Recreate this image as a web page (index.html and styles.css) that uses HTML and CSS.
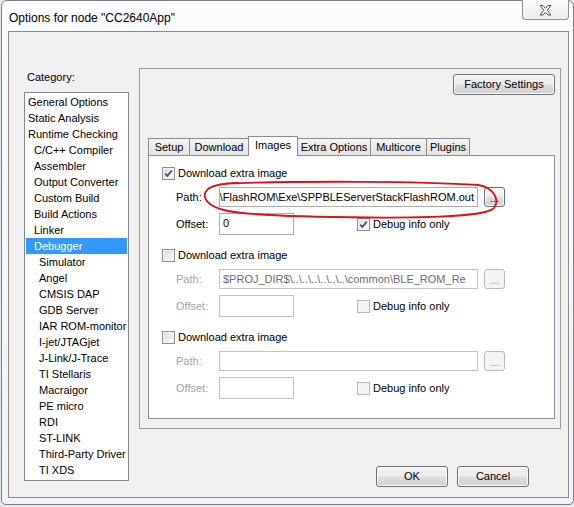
FILE: index.html
```html
<!DOCTYPE html>
<html>
<head>
<meta charset="utf-8">
<title>Options for node "CC2640App"</title>
<link rel="stylesheet" href="styles.css">
</head>
<body>
<div class="window">
  <div class="titlebar">
    <span class="title">Options for node "CC2640App"</span>
    <div class="close">
      <svg width="13" height="11" viewBox="0 0 13 11"><polygon points="1,0.5 4,0.5 6.5,3.3 9,0.5 12,0.5 8.2,5.2 12,10 9,10 6.5,7.2 4,10 1,10 4.8,5.2" fill="#fdfdfd" stroke="#4f4f4f" stroke-width="1" stroke-linejoin="round"/></svg>
    </div>
  </div>
  <div class="client">
    <div class="left">
      <div class="cat-label">Category:</div>
      <ul class="catlist">
        <li class="cat-item">General Options</li>
        <li class="cat-item">Static Analysis</li>
        <li class="cat-item">Runtime Checking</li>
        <li class="cat-item l1">C/C++ Compiler</li>
        <li class="cat-item l1">Assembler</li>
        <li class="cat-item l1">Output Converter</li>
        <li class="cat-item l1">Custom Build</li>
        <li class="cat-item l1">Build Actions</li>
        <li class="cat-item l1">Linker</li>
        <li class="cat-item l1 sel">Debugger</li>
        <li class="cat-item l2">Simulator</li>
        <li class="cat-item l2">Angel</li>
        <li class="cat-item l2">CMSIS DAP</li>
        <li class="cat-item l2">GDB Server</li>
        <li class="cat-item l2">IAR ROM-monitor</li>
        <li class="cat-item l2">I-jet/JTAGjet</li>
        <li class="cat-item l2">J-Link/J-Trace</li>
        <li class="cat-item l2">TI Stellaris</li>
        <li class="cat-item l2">Macraigor</li>
        <li class="cat-item l2">PE micro</li>
        <li class="cat-item l2">RDI</li>
        <li class="cat-item l2">ST-LINK</li>
        <li class="cat-item l2">Third-Party Driver</li>
        <li class="cat-item l2">TI XDS</li>
      </ul>
    </div>
    <div class="right">
      <div class="pane">
        <div class="pane-top"><div class="btn factory">Factory Settings</div></div>
        <div class="tabs">
          <div class="tab w-setup">Setup</div>
          <div class="tab w-download">Download</div>
          <div class="tab w-images active">Images</div>
          <div class="tab w-extra">Extra Options</div>
          <div class="tab w-multi">Multicore</div>
          <div class="tab w-plugins">Plugins</div>
        </div>
        <div class="tabpage">
          <div class="group">
            <div class="ghead">
              <span class="cb"><svg width="11" height="11" viewBox="0 0 11 11"><path d="M2.2 5.6 L4.4 7.9 L8.8 2.6" fill="none" stroke="#44557a" stroke-width="1.7"/></svg></span>
              <span class="lbl">Download extra image</span>
            </div>
            <div class="row path">
              <span class="flabel">Path:</span>
              <div class="field path-input end"><span class="val">\FlashROM\Exe\SPPBLEServerStackFlashROM.out</span></div>
              <div class="btn browse">...</div>
            </div>
            <div class="row offset">
              <span class="flabel">Offset:</span>
              <div class="field off-input"><span class="val">0</span></div>
              <div class="dbg">
                <span class="cb"><svg width="11" height="11" viewBox="0 0 11 11"><path d="M2.2 5.6 L4.4 7.9 L8.8 2.6" fill="none" stroke="#44557a" stroke-width="1.7"/></svg></span>
                <span class="lbl">Debug info only</span>
              </div>
            </div>
          </div>
          <div class="group disabled">
            <div class="ghead">
              <span class="cb"></span>
              <span class="lbl">Download extra image</span>
            </div>
            <div class="row path">
              <span class="flabel">Path:</span>
              <div class="field path-input"><span class="val">$PROJ_DIR$\..\..\..\..\..\..\common\BLE_ROM_Re</span></div>
              <div class="btn browse">...</div>
            </div>
            <div class="row offset">
              <span class="flabel">Offset:</span>
              <div class="field off-input"></div>
              <div class="dbg">
                <span class="cb dis"></span>
                <span class="lbl">Debug info only</span>
              </div>
            </div>
          </div>
          <div class="group disabled">
            <div class="ghead">
              <span class="cb"></span>
              <span class="lbl">Download extra image</span>
            </div>
            <div class="row path">
              <span class="flabel">Path:</span>
              <div class="field path-input"></div>
              <div class="btn browse">...</div>
            </div>
            <div class="row offset">
              <span class="flabel">Offset:</span>
              <div class="field off-input"></div>
              <div class="dbg">
                <span class="cb dis"></span>
                <span class="lbl">Debug info only</span>
              </div>
            </div>
          </div>
        </div>
      </div>
      <div class="buttons">
        <div class="btn dlg">OK</div>
        <div class="btn dlg">Cancel</div>
      </div>
    </div>
  </div>
</div>
<svg class="annot" width="574" height="507" viewBox="0 0 574 507">
  <path d="M226 183.5 C300 181, 420 181, 478 185 C494 187.5, 500 200, 494 208 C486 216, 440 218, 370 217.5 C300 217, 250 215, 228 211 C207 207, 201 197, 207 190 C211 185.5, 220 183.5, 238 183" fill="none" stroke="#d9141a" stroke-width="1.8" stroke-linecap="round"/>
</svg>
</body>
</html>
```
FILE: styles.css
```css
* { box-sizing: border-box; }
html, body { margin: 0; padding: 0; }
body {
  position: relative;
  width: 574px;
  height: 507px;
  overflow: hidden;
  background: #e3e6ea;
  font-family: "Liberation Sans", Arial, sans-serif;
  font-size: 11px;
  color: #000;
}
.window {
  margin-left: 1px;
  width: 573px;
  height: 505px;
  border: 1px solid #7b7f85;
  border-radius: 6px 6px 5px 5px;
  background: linear-gradient(#fafbfc, #f1f3f6);
  padding: 0 4px 0 6px;
}
.titlebar {
  height: 30px;
  display: flex;
  justify-content: space-between;
  align-items: flex-start;
}
.title {
  font-size: 12px;
  line-height: 16px;
  padding: 9px 0 0 1px;
  color: #000;
}
.close {
  width: 47px;
  height: 20px;
  margin-top: -1px;
  border: 1px solid #8d9095;
  border-top: none;
  border-radius: 0 0 4px 4px;
  background: linear-gradient(#fbfbfb, #eceef1);
  display: flex;
  align-items: center;
  justify-content: center;
  padding-top: 1px;
}
.client {
  height: 467px;
  border: 1px solid #8c8c8c;
  background: #f0f0f0;
  display: flex;
  padding: 0 7px 0 15px;
}
.left { width: 105px; margin-top: 39px; }
.cat-label { height: 13px; line-height: 13px; margin-left: 3px; }
.catlist {
  margin: 8px 0 0 0;
  height: 389px;
  border: 1px solid #828790;
  background: #fff;
  padding: 1px;
  list-style: none;
}
.cat-item {
  height: 16px;
  line-height: 16px;
  padding-left: 2px;
  white-space: nowrap;
}
.cat-item.l1 { padding-left: 8px; }
.cat-item.l2 { padding-left: 13px; }
.cat-item.sel { background: #3399ff; color: #fff; }
.right {
  margin-left: 10px;
  width: 422px;
  margin-top: 36px;
  display: flex;
  flex-direction: column;
}
.pane {
  height: 361px;
  border: 1px solid #9a9a9a;
  padding: 5px 5px 9px 8px;
  display: flex;
  flex-direction: column;
}
.pane-top { display: flex; justify-content: flex-end; }
.btn {
  height: 21px;
  border: 1px solid #707070;
  border-radius: 3px;
  background: linear-gradient(#f4f4f4 0%, #ececec 48%, #dedede 52%, #d2d2d2 100%);
  box-shadow: inset 0 0 0 1px #fbfbfb;
  display: flex;
  align-items: center;
  justify-content: center;
  line-height: 13px;
}
.factory { width: 102px; }
.tabs {
  margin-top: 41px;
  height: 19px;
  display: flex;
  align-items: flex-end;
  position: relative;
  z-index: 1;
}
.tab {
  height: 17px;
  border: 1px solid #898c95;
  border-bottom: none;
  background: linear-gradient(#f4f4f4, #e2e2e2);
  text-align: center;
  line-height: 16px;
  margin-left: -1px;
}
.tab:first-child { margin-left: 0; }
.tab.active {
  height: 20px;
  margin-bottom: -1px;
  background: #fff;
  line-height: 17px;
  position: relative;
}
.w-setup { width: 42px; }
.w-download { width: 60px; }
.w-images { width: 50px; }
.w-extra { width: 74px; }
.w-multi { width: 57px; }
.w-plugins { width: 44px; }
.tabpage {
  height: 264px;
  border: 1px solid #898c95;
  background: #fff;
  padding: 11px 0 0 13px;
}
.group { height: 82px; }
.ghead { display: flex; align-items: center; height: 13px; }
.lbl { margin-left: 3px; line-height: 13px; white-space: nowrap; }
.cb {
  width: 13px;
  height: 13px;
  flex: none;
  border: 1px solid #8e8f8f;
  background: linear-gradient(135deg, #d9dbde, #fbfbfb);
  box-shadow: inset 0 0 0 1px #f3f3f3;
  display: flex;
  align-items: center;
  justify-content: center;
}
.cb.dis {
  border-color: #b8b8b8;
  background: #f4f4f4;
}
.row { display: flex; align-items: center; margin-left: 14px; }
.row.path { margin-top: 7px; height: 20px; }
.row.offset { margin-top: 6px; height: 22px; }
.flabel { width: 43px; flex: none; line-height: 13px; }
.field {
  border: 1px solid #abadb3;
  background: #fff;
  overflow: hidden;
  white-space: nowrap;
  display: flex;
  padding: 0 3px;
}
.path-input { width: 259px; height: 20px; align-items: center; }
.path-input.end { justify-content: flex-end; }
.val { flex: none; line-height: 13px; }
.off-input { width: 75px; height: 22px; align-items: flex-start; padding-top: 3px; }
.browse { width: 21px; height: 20px; margin-left: 6px; align-items: flex-end; padding-bottom: 4px; line-height: 8px; }
.dbg { display: flex; align-items: center; margin-left: 63px; }
.disabled .flabel { color: #a3a3a3; }
.disabled .field { border-color: #bfc1c6; }
.disabled .val { color: #6d6d6d; }
.disabled .browse {
  border-color: #b6b9bd;
  background: #f4f4f4;
  box-shadow: none;
  color: #8d8d8d;
}
.buttons {
  display: flex;
  justify-content: flex-end;
  gap: 9px;
  margin-top: 37px;
  margin-right: 32px;
}
.dlg { width: 72px; }
.annot { position: absolute; left: 0; top: 0; pointer-events: none; }
```
